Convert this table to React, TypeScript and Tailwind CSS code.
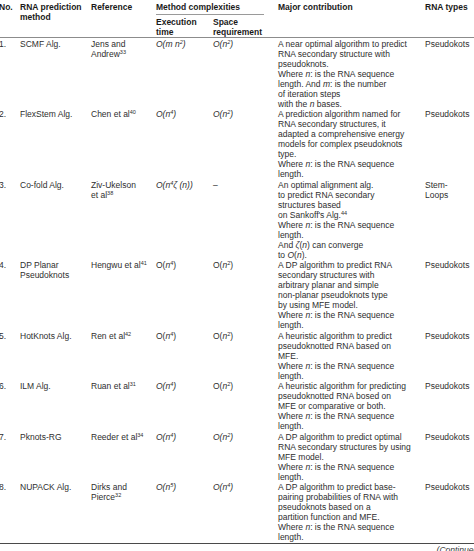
import React from 'react';

type Row = {
  no: string;
  method: React.ReactNode[];
  reference: React.ReactNode[];
  exec: React.ReactNode;
  space: React.ReactNode;
  contribution: React.ReactNode[];
  types: string[];
};

const Sup = ({ children }: { children: React.ReactNode }) => (
  <sup className="text-[5.5px]">{children}</sup>
);

const N = () => <i>n</i>;
const where = (
  <>
    Where <i>n</i>: is the RNA sequence
  </>
);

const rows: Row[] = [
  {
    no: '1.',
    method: ['SCMF Alg.'],
    reference: ['Jens and', <>Andrew<Sup>33</Sup></>],
    exec: <i>O(m n<Sup>2</Sup>)</i>,
    space: <i>O(n<Sup>2</Sup>)</i>,
    contribution: [
      'A near optimal algorithm to predict',
      'RNA secondary structure with',
      'pseudoknots.',
      where,
      <>length. And <i>m</i>: is the number</>,
      'of iteration steps',
      <>with the <N /> bases.</>,
    ],
    types: ['Pseudokots'],
  },
  {
    no: '2.',
    method: ['FlexStem Alg.'],
    reference: [<>Chen et al<Sup>40</Sup></>],
    exec: <i>O(n<Sup>4</Sup>)</i>,
    space: <i>O(n<Sup>2</Sup>)</i>,
    contribution: [
      'A prediction algorithm named for',
      'RNA secondary structures, it',
      'adapted a comprehensive energy',
      'models for complex pseudoknots',
      'type.',
      where,
      'length.',
    ],
    types: ['Pseudokots'],
  },
  {
    no: '3.',
    method: ['Co-fold Alg.'],
    reference: ['Ziv-Ukelson', <>et al<Sup>38</Sup></>],
    exec: <i>O(n<Sup>4</Sup>ζ (n))</i>,
    space: '–',
    contribution: [
      'An optimal alignment alg.',
      'to predict RNA secondary',
      'structures based',
      <>on Sankoff's Alg.<Sup>44</Sup></>,
      where,
      'length.',
      <>And <i>ζ</i>(<N />) can converge</>,
      <>to <i>O</i>(<N />).</>,
    ],
    types: ['Stem-', 'Loops'],
  },
  {
    no: '4.',
    method: ['DP Planar', 'Pseudoknots'],
    reference: [<>Hengwu et al<Sup>41</Sup></>],
    exec: <>O(<N /><Sup>4</Sup>)</>,
    space: <>O(<N /><Sup>2</Sup>)</>,
    contribution: [
      'A DP algorithm to predict RNA',
      'secondary structures with',
      'arbitrary planar and simple',
      'non-planar pseudoknots type',
      'by using MFE model.',
      where,
      'length.',
    ],
    types: ['Pseudokots'],
  },
  {
    no: '5.',
    method: ['HotKnots Alg.'],
    reference: [<>Ren et al<Sup>42</Sup></>],
    exec: <>O(<N /><Sup>4</Sup>)</>,
    space: <>O(<N /><Sup>2</Sup>)</>,
    contribution: [
      'A heuristic algorithm to predict',
      'pseudoknotted RNA based on',
      'MFE.',
      where,
      'length.',
    ],
    types: ['Pseudokots'],
  },
  {
    no: '6.',
    method: ['ILM Alg.'],
    reference: [<>Ruan et al<Sup>31</Sup></>],
    exec: <i>O(n<Sup>4</Sup>)</i>,
    space: <>O(<N /><Sup>2</Sup>)</>,
    contribution: [
      'A heuristic algorithm for predicting',
      'pseudoknotted RNA bosed on',
      'MFE or comparative or both.',
      where,
      'length.',
    ],
    types: ['Pseudokots'],
  },
  {
    no: '7.',
    method: ['Pknots-RG'],
    reference: [<>Reeder et al<Sup>34</Sup></>],
    exec: <i>O(n<Sup>4</Sup>)</i>,
    space: <i>O(n<Sup>2</Sup>)</i>,
    contribution: [
      'A DP algorithm to predict optimal',
      'RNA secondary structures by using',
      'MFE model.',
      where,
      'length.',
    ],
    types: ['Pseudokots'],
  },
  {
    no: '8.',
    method: ['NUPACK Alg.'],
    reference: ['Dirks and', <>Pierce<Sup>32</Sup></>],
    exec: <i>O(n<Sup>5</Sup>)</i>,
    space: <i>O(n<Sup>4</Sup>)</i>,
    contribution: [
      'A DP algorithm to predict base-',
      'pairing probabilities of RNA with',
      'pseudoknots based on a',
      'partition function and MFE.',
      where,
      'length.',
    ],
    types: ['Pseudokots'],
  },
];

const cols = 'grid grid-cols-[21px_71px_65px_57px_65px_147px_58px]';

function Lines({ lines }: { lines: React.ReactNode[] }) {
  return (
    <div>
      {lines.map((l, i) => (
        <div key={i} className="whitespace-nowrap">
          {l}
        </div>
      ))}
    </div>
  );
}

export default function App() {
  return (
    <div className="h-[551px] w-[474px] overflow-hidden bg-white font-['Liberation_Sans',Arial,sans-serif] text-[8.5px] leading-[10px] text-[#2e2e2e]">
      <div className="-ml-px w-[484px]">
        {/* header */}
        <div className={`${cols} grid-rows-[auto_auto] border-b-[1.5px] border-[#8c8c8c] pt-[2px] font-bold text-[#1a1a1a]`}>
          <div className="row-span-2">No.</div>
          <div className="row-span-2">
            RNA prediction
            <br />
            method
          </div>
          <div className="row-span-2">Reference</div>
          <div className="col-span-2 pb-px">
            <div className="mr-[14px] border-b border-[#9a9a9a] pb-[1.5px] whitespace-nowrap">Method complexities</div>
          </div>
          <div className="row-span-2">Major contribution</div>
          <div className="row-span-2 whitespace-nowrap">RNA types</div>
          <div className="pt-[1.5px]">
            Execution
            <br />
            time
          </div>
          <div className="pt-[1.5px]">
            Space
            <br />
            requirement
          </div>
        </div>

        {/* body */}
        <div className="border-b-[1.5px] border-[#4a4a4a] pb-px">
          {rows.map((r) => (
            <div key={r.no} className={`${cols} pt-[0.5px]`}>
              <div>{r.no}</div>
              <Lines lines={r.method} />
              <Lines lines={r.reference} />
              <div className="whitespace-nowrap">{r.exec}</div>
              <div className="whitespace-nowrap">{r.space}</div>
              <Lines lines={r.contribution} />
              <Lines lines={r.types} />
            </div>
          ))}
        </div>

        <div className="flex justify-end pt-px">
          <span className="pr-[2px] italic text-[#3a3a3a] whitespace-nowrap">(Continued)</span>
        </div>
      </div>
    </div>
  );
}
